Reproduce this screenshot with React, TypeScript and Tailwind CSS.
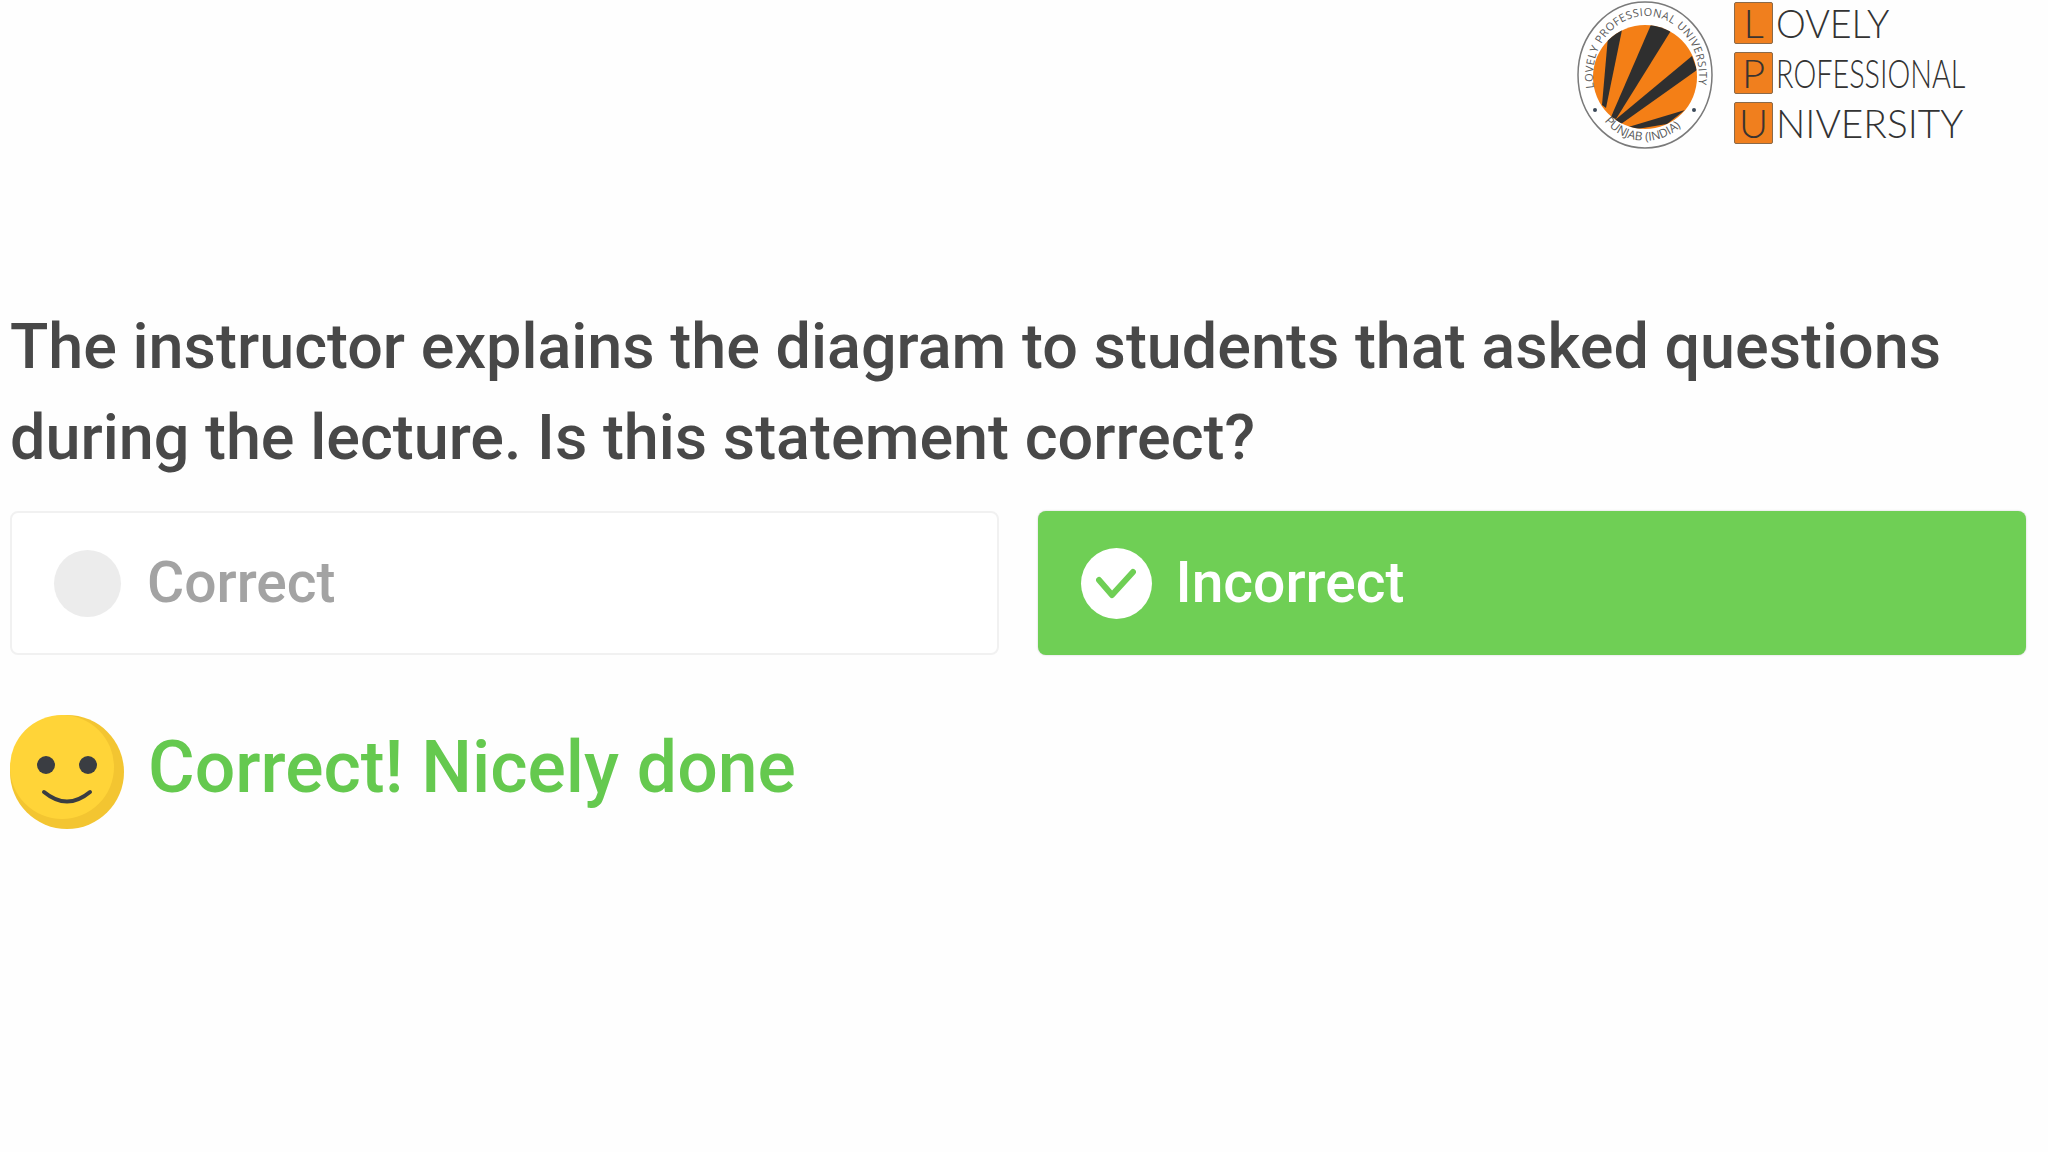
function Seal() {
  return (
    <svg width="150" height="150" viewBox="0 0 150 150" className="shrink-0">
      <defs>
        <clipPath id="disc">
          <circle cx="70" cy="77" r="52" />
        </clipPath>
        <path id="arcTop" d="M 19 88 A 53 60 0 1 1 122 92" />
        <path id="arcBottom" d="M 27 118 A 52 52 0 0 0 113 118" />
      </defs>
      <ellipse cx="70" cy="75" rx="67" ry="73" fill="#fff" stroke="#7a7a7a" strokeWidth="1.5" />
      <circle cx="70" cy="77" r="52" fill="#f47f16" />
      <g clipPath="url(#disc)" fill="#2f2f2f">
        <path d="M27 105 L34 25 L48 25 L31 108 Z" />
        <path d="M36 117 L78 20 L97 29 L41 119 Z" />
        <path d="M40 120 L117 56 L122 70 L46 124 Z" />
        <path d="M50 128 L110 110 L92 124 L56 130 Z" />
      </g>
      <text fontFamily="Open Sans, sans-serif" fontSize="11" fill="#5a5a5a">
        <textPath href="#arcTop" textLength="198" lengthAdjust="spacing">
          LOVELY PROFESSIONAL UNIVERSITY
        </textPath>
      </text>
      <text fontFamily="Open Sans, sans-serif" fontSize="12" fill="#5a5a5a">
        <textPath href="#arcBottom" startOffset="4">
          PUNJAB (INDIA)
        </textPath>
      </text>
      <circle cx="20" cy="110" r="2" fill="#3b4a5a" />
      <circle cx="119" cy="110" r="2" fill="#3b4a5a" />
    </svg>
  );
}

function LogoRow({ letter, rest, textClass }: { letter: string; rest: string; textClass: string }) {
  return (
    <div className="flex h-[42px] items-center">
      <div className="flex h-[42px] w-[39px] shrink-0 items-center justify-center rounded-[2px] border border-[#8a6a4a] bg-[#f07f1e] font-['Lato'] text-[40px] leading-none font-light text-[#3a3330]">
        {letter}
      </div>
      <span className={`ml-[3px] origin-left font-['Lato'] leading-[42px] font-light whitespace-nowrap text-[#333] ${textClass}`}>
        {rest}
      </span>
    </div>
  );
}

function Logo() {
  return (
    <div className="flex h-[150px] justify-end pr-[82px]">
      <Seal />
      <div className="ml-[9px] flex w-[232px] flex-col gap-[8px] pt-[2px]">
        <LogoRow letter="L" rest="OVELY" textClass="text-[40px] scale-x-[0.94]" />
        <LogoRow letter="P" rest="ROFESSIONAL" textClass="text-[40px] scale-x-[0.72]" />
        <LogoRow letter="U" rest="NIVERSITY" textClass="text-[40px] scale-x-[0.97]" />
      </div>
    </div>
  );
}

function Smiley() {
  return (
    <svg width="114" height="114" viewBox="0 0 114 114" className="shrink-0">
      <circle cx="57" cy="57" r="57" fill="#f3c531" />
      <circle cx="52" cy="52" r="52" fill="#ffd438" />
      <circle cx="36" cy="50" r="9" fill="#3a3d42" />
      <circle cx="78" cy="50" r="9" fill="#3a3d42" />
      <path d="M34 77 Q57 96 80 77" fill="none" stroke="#3a3d42" strokeWidth="4" strokeLinecap="round" />
    </svg>
  );
}

export default function App() {
  return (
    <div className="h-[1152px] overflow-hidden bg-[#fefefe] font-['Roboto',sans-serif]">
      <Logo />

      <div className="px-[10px] pt-[151px]">
        <p className="text-[62.9px] leading-[91px] font-medium whitespace-nowrap text-[#484848]">
          The instructor explains the diagram to students that asked questions
          <br />
          during the lecture. Is this statement correct?
        </p>
      </div>

      <div className="mt-[28px] grid grid-cols-2 gap-[39px] pr-[22px] pl-[10px]">
        <div className="flex h-[144px] items-center rounded-[8px] border-2 border-[#f1f1f1] bg-white pl-[42px]">
          <span className="h-[67px] w-[67px] rounded-full bg-[#ececec]" />
          <span className="ml-[26px] text-[57px] font-medium text-[#a3a3a3]">Correct</span>
        </div>
        <div className="flex h-[144px] items-center rounded-[8px] bg-[#6fcf55] pl-[43px] shadow-[0_0_2px_#c8c8c8]">
          <span className="flex h-[71px] w-[71px] items-center justify-center rounded-full bg-white">
            <svg width="40" height="32" viewBox="0 0 40 32" fill="none">
              <path d="M3 13 L16 28 L37 5" stroke="#6fcf55" strokeWidth="6" strokeLinecap="round" strokeLinejoin="round" />
            </svg>
          </span>
          <span className="ml-[24px] text-[57px] font-medium text-white">Incorrect</span>
        </div>
      </div>

      <div className="mt-[59px] flex items-center pl-[10px]">
        <Smiley />
        <span className="mb-[8px] ml-[24px] text-[71.5px] font-medium text-[#65c94f]">Correct! Nicely done</span>
      </div>
    </div>
  );
}
